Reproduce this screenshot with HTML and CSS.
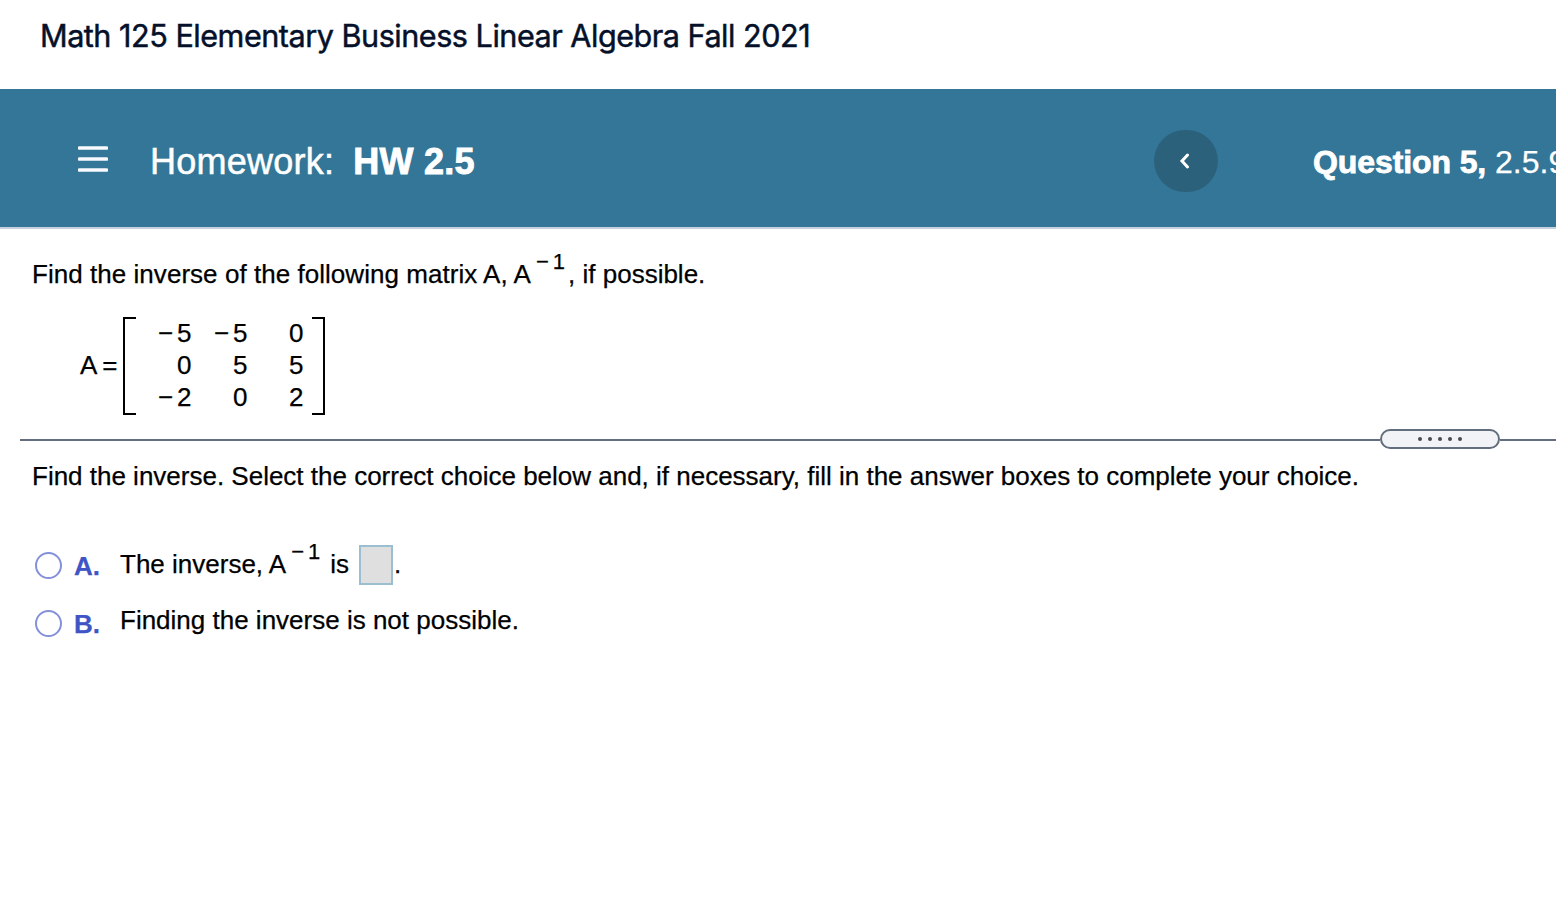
FILE: index.html
```html
<!DOCTYPE html>
<html lang="en">
<head>
<meta charset="utf-8">
<title>Homework: HW 2.5</title>
<link rel="stylesheet" href="styles.css">
</head>
<body>
<header class="course"><h1 class="course-title">Math 125 Elementary Business Linear Algebra Fall 2021</h1></header>
<nav class="banner">
  <svg class="menu" viewBox="0 0 30 26"><path d="M1.5 2H28.5M1.5 13H28.5M1.5 24H28.5"/></svg>
  <div class="assignment"><span class="kind">Homework:</span><b class="name">HW 2.5</b></div>
  <button class="prev" aria-label="Previous question"><svg class="chevron" viewBox="0 0 12 16"><path d="M8.5 2L3 8L8.5 14"/></svg></button>
  <div class="question"><b class="qnum">Question 5,</b> <span class="qid">2.5.9</span></div>
</nav>
<main class="exercise">
  <p class="prompt"><span class="lead">Find the inverse of the following matrix A, A</span><span class="sup"><span class="neg">−</span>1</span><span class="tail">, if possible.</span></p>
  <div class="equation">
    <span class="lhs">A</span><span class="eq">=</span>
    <div class="matrix">
      <span class="bracket left"></span>
      <div class="cells">
        <span><i class="neg">−</i>5</span><span><i class="neg">−</i>5</span><span>0</span>
        <span>0</span><span>5</span><span>5</span>
        <span><i class="neg">−</i>2</span><span>0</span><span>2</span>
      </div>
      <span class="bracket right"></span>
    </div>
  </div>
  <div class="divider">
    <span class="rule"></span>
    <span class="handle"><i class="dot"></i><i class="dot"></i><i class="dot"></i><i class="dot"></i><i class="dot"></i></span>
    <span class="rule end"></span>
  </div>
  <p class="instructions">Find the inverse. Select the correct choice below and, if necessary, fill in the answer boxes to complete your choice.</p>
  <div class="choices">
    <div class="choice">
      <span class="radio"></span><b class="letter">A.</b>
      <span class="answer"><span class="lead-a">The inverse, A</span><span class="sup"><span class="neg">−</span>1</span><span class="is">is</span><span class="box"></span><span class="stop">.</span></span>
    </div>
    <div class="choice second">
      <span class="radio"></span><b class="letter">B.</b>
      <span class="answer">Finding the inverse is not possible.</span>
    </div>
  </div>
</main>
</body>
</html>
```
FILE: styles.css
```css
* { box-sizing: border-box; }
body {
  margin: 0;
  width: 1556px;
  height: 918px;
  overflow: hidden;
  background: #fff;
  color: #000;
  font: 26px/30px "Liberation Sans", Arial, sans-serif;
  -webkit-text-stroke: 0.25px currentColor;
  white-space: nowrap;
}
p, h1 { margin: 0; font-weight: inherit; }
i { font-style: normal; }

.course { height: 89px; padding: 16px 0 0 40px; }
.course-title {
  font: 400 30.6px/40px Inter, sans-serif;
  letter-spacing: -0.49px;
  color: #05112a;
  -webkit-text-stroke: 0.5px currentColor;
}

.banner {
  display: flex;
  align-items: flex-start;
  height: 140px;
  padding-left: 78px;
  background: #337697;
  border-bottom: 2px solid #c8d2de;
  color: #fff;
  overflow: hidden;
}
.menu { flex: none; width: 30px; height: 26px; margin-top: 57px; }
.menu path { stroke: #f8faff; stroke-width: 3.6; stroke-linecap: round; }
.assignment {
  display: flex;
  flex: none;
  gap: 19px;
  width: 1004px;
  margin: 53px 0 0 42px;
  font-size: 36px;
  line-height: 40px;
  letter-spacing: 0.25px;
}
.kind { -webkit-text-stroke: 0.5px currentColor; }
.name { -webkit-text-stroke: 0.9px currentColor; }
.prev {
  display: flex;
  align-items: center;
  justify-content: center;
  flex: none;
  width: 64px;
  height: 62px;
  margin-top: 41px;
  padding: 0 2px 0 0;
  border: 0;
  border-radius: 31px;
  background: #2c617c;
}
.chevron { width: 12px; height: 16px; }
.chevron path { fill: none; stroke: #fff; stroke-width: 3; stroke-linecap: round; }
.question { flex: none; margin: 53px 0 0 95px; font-size: 32px; line-height: 40px; }
.qnum { letter-spacing: -0.1px; -webkit-text-stroke: 0.8px currentColor; }

.exercise { padding-top: 30px; }
.prompt { display: flex; height: 30px; margin-left: 32px; }
.lead { letter-spacing: 0.04px; }
.sup { display: inline-flex; font-size: 22px; line-height: 30px; margin-top: -12px; padding-left: 5px; }
.sup .neg { margin-right: 4px; }
.tail { margin-left: 3px; }

.equation { display: flex; align-items: center; height: 98px; margin: 28px 0 0 80px; }
.lhs, .eq { margin-top: -2px; }
.eq { margin-left: 5px; }
.matrix { display: flex; width: 202px; height: 98px; margin-left: 5px; }
.bracket { width: 13px; border: 2px solid #000; }
.left { border-right: 0; }
.right { border-left: 0; }
.cells {
  display: grid;
  grid-template-columns: repeat(3, 56px);
  grid-auto-rows: 32px;
  width: 176px;
  line-height: 32px;
  text-align: right;
}
.cells .neg { margin-right: 4px; }

.divider { display: flex; align-items: center; height: 20px; margin: 14px 0 0 20px; }
.rule { flex: 1; height: 2px; margin-top: 2px; background: #626e7d; }
.end { flex: 0 0 56px; }
.handle {
  display: flex;
  align-items: center;
  justify-content: center;
  gap: 6px;
  width: 120px;
  height: 20px;
  border: 2px solid #626e7d;
  border-radius: 10px;
  background: #f1f3f6;
}
.dot { width: 4px; height: 4px; border-radius: 50%; background: #4b4b4b; }
.instructions { margin: 12px 0 0 32px; letter-spacing: -0.005px; }

.choices { margin: 54px 0 0 35px; }
.choice { display: flex; height: 40px; }
.second { margin-top: 18px; }
.radio { width: 27px; height: 27px; margin-top: 7px; border: 2.5px solid #8490da; border-radius: 50%; }
.letter { width: 46px; margin: 6px 0 0 12px; color: #4055c5; }
.answer { display: flex; margin-top: 4px; }
.second .answer { margin-top: 2px; }
.is { margin-left: 10px; }
.box { width: 34px; height: 40px; margin: -4px 0 0 10px; border: 2px solid #9bbfd0; background: #dfdfdf; }
.stop { margin-left: 1px; }
```
